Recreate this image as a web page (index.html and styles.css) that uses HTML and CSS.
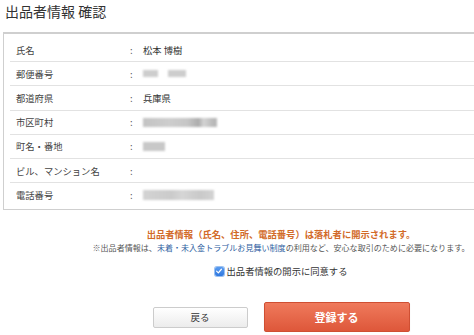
FILE: index.html
```html
<!DOCTYPE html>
<html lang="ja">
<head>
<meta charset="utf-8">
<title>出品者情報 確認</title>
<link rel="stylesheet" href="styles.css">
</head>
<body>
<div class="page">
  <h1 class="title">出品者情報 確認</h1>
  <div class="box">
    <div class="row"><span class="label">氏名</span><span class="colon">:</span><span class="value">松本 博樹</span></div>
    <div class="row"><span class="label">郵便番号</span><span class="colon">:</span><span class="value"><span class="blur b-zip1"></span><span class="blur b-zip2"></span></span></div>
    <div class="row"><span class="label">都道府県</span><span class="colon">:</span><span class="value">兵庫県</span></div>
    <div class="row"><span class="label">市区町村</span><span class="colon">:</span><span class="value"><span class="blur b-city"></span></span></div>
    <div class="row"><span class="label">町名・番地</span><span class="colon">:</span><span class="value"><span class="blur b-town"></span></span></div>
    <div class="row"><span class="label">ビル、マンション名</span><span class="colon">:</span><span class="value"></span></div>
    <div class="row"><span class="label">電話番号</span><span class="colon">:</span><span class="value"><span class="blur b-tel"></span></span></div>
  </div>
  <div class="notice">
    <p class="warn">出品者情報（氏名、住所、電話番号）は落札者に開示されます。</p>
    <p class="note">※出品者情報は、<a class="link" href="#">未着・未入金トラブルお見舞い制度</a>の利用など、安心な取引のために必要になります。</p>
    <label class="agree"><span class="check"><svg viewBox="0 0 10 10" width="8" height="8"><path d="M2 5.2 L4.2 7.3 L8 2.8" fill="none" stroke="#fff" stroke-width="1.5" stroke-linecap="round" stroke-linejoin="round"/></svg></span>出品者情報の開示に同意する</label>
    <div class="buttons">
      <button class="btn back">戻る</button>
      <button class="btn submit">登録する</button>
    </div>
  </div>
</div>
</body>
</html>
```
FILE: styles.css
```css
html, body {
  margin: 0;
  padding: 0;
  background: #fff;
  overflow: hidden;
}
body {
  font-family: "Noto Sans CJK JP", "Noto Sans", sans-serif;
  color: #333;
}
.page {
  width: 556px;
  margin-left: 3px;
}
.title {
  margin: 0;
  padding: 1px 0 0 2px;
  height: 32px;
  box-sizing: border-box;
  font-size: 14px;
  font-weight: normal;
  line-height: 20px;
  color: #333;
}
.box {
  border: 1px solid #cfcfcf;
  border-top: 2px solid #cfcfcf;
  padding: 4px 0 3px 6px;
}
.row {
  display: flex;
  align-items: center;
  height: 23.2px;
  border-bottom: 1px solid #e2e2e2;
  font-size: 9.3px;
}
.row:last-child {
  border-bottom: none;
}
.label {
  width: 114px;
  padding-left: 6px;
  color: #444;
}
.colon {
  width: 13px;
  color: #555;
}
.value {
  display: flex;
  align-items: center;
  gap: 10px;
  color: #333;
}
.blur {
  display: inline-block;
  height: 7px;
  background: #cdcdcd;
  filter: blur(1.3px);
}
.b-zip1 { width: 15px; }
.b-zip2 { width: 18px; }
.b-city {
  width: 74px;
  height: 9px;
  background: linear-gradient(90deg, #c3c3c3 0%, #cdcdcd 35%, #c6c6c6 60%, #acacac 75%, #d4d4d4 82%, #b8b8b8 95%);
}
.b-town { width: 22px; height: 9px; background: #c8c8c8; }
.b-tel {
  width: 71px;
  height: 10px;
  background: linear-gradient(90deg, #d3d3d3 0%, #cbcbcb 40%, #d6d6d6 55%, #c9c9c9 80%, #d3d3d3 100%);
}
.notice {
  display: flex;
  flex-direction: column;
  align-items: center;
  padding-top: 18px;
}
.warn {
  margin: 0;
  font-size: 9.3px;
  line-height: 13px;
  font-weight: bold;
  color: #d26a28;
}
.note {
  margin: 0;
  font-size: 8.05px;
  line-height: 13px;
  color: #555;
}
.link {
  color: #2f5f9f;
  text-decoration: none;
}
.agree {
  display: flex;
  align-items: center;
  gap: 3px;
  margin-top: 10px;
  font-size: 9.3px;
  line-height: 14px;
  color: #333;
}
.check {
  display: inline-flex;
  align-items: center;
  justify-content: center;
  width: 9px;
  height: 9px;
  border-radius: 2px;
  background: linear-gradient(#5a9cf0, #2f78e0);
  box-shadow: 0 0 0 1px #9cc1f0;
}
.buttons {
  display: flex;
  align-items: center;
  gap: 16px;
  margin-top: 24px;
}
.btn {
  font-family: inherit;
  padding: 0;
  cursor: pointer;
}
.back {
  width: 95px;
  height: 21px;
  border: 1px solid #cccccc;
  border-radius: 2px;
  background: linear-gradient(#ffffff, #ececec);
  font-size: 9.5px;
  color: #333;
}
.submit {
  width: 146px;
  height: 30px;
  border: 1px solid #cf4f33;
  border-radius: 2px;
  background: linear-gradient(#ef7a5c, #de573a);
  font-size: 11px;
  font-weight: bold;
  color: #fff;
  box-shadow: 0 1px 1px rgba(0,0,0,0.15);
}
```
